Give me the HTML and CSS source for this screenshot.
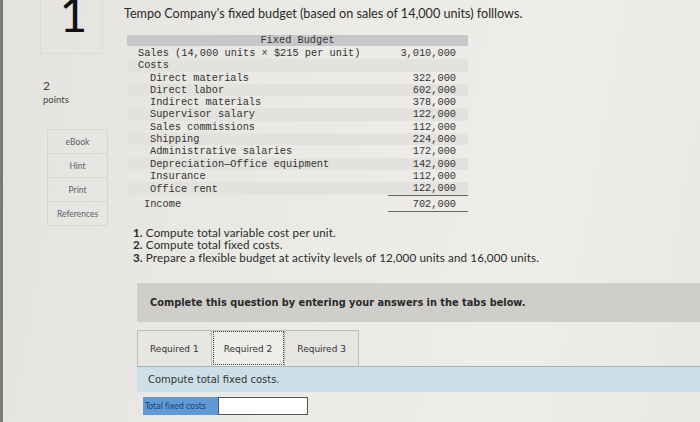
FILE: index.html
```html
<!DOCTYPE html>
<html lang="en">
<head>
  <meta charset="UTF-8"/>
  <title>Tempo Company fixed budget</title>
  <link rel="stylesheet" href="styles.css">
</head>
<body>
  <div class="page">
    <div class="side">
      <div class="qnum"><span>1</span></div>
      <div class="points"><span class="pts-n">2</span><span class="pts-l">points</span></div>
      <div class="tools">
        <div class="tool">eBook</div>
        <div class="tool">Hint</div>
        <div class="tool">Print</div>
        <div class="tool">References</div>
      </div>
    </div>
    <div class="main">
      <p class="title">Tempo Company's fixed budget (based on sales of 14,000 units) folllows.</p>
      <table class="budget">
        <tr class="head"><th colspan="2">Fixed Budget</th></tr>
        <tr><td>Sales (14,000 units &times; $215 per unit)</td><td class="num">3,010,000</td></tr>
        <tr class="alt"><td>Costs</td><td class="num"></td></tr>
        <tr><td class="ind">Direct materials</td><td class="num">322,000</td></tr>
        <tr class="alt"><td class="ind">Direct labor</td><td class="num">602,000</td></tr>
        <tr><td class="ind">Indirect materials</td><td class="num">378,000</td></tr>
        <tr class="alt"><td class="ind">Supervisor salary</td><td class="num">122,000</td></tr>
        <tr><td class="ind">Sales commissions</td><td class="num">112,000</td></tr>
        <tr class="alt"><td class="ind">Shipping</td><td class="num">224,000</td></tr>
        <tr><td class="ind">Administrative salaries</td><td class="num">172,000</td></tr>
        <tr class="alt"><td class="ind">Depreciation&mdash;Office equipment</td><td class="num">142,000</td></tr>
        <tr><td class="ind">Insurance</td><td class="num">112,000</td></tr>
        <tr class="alt"><td class="ind">Office rent</td><td class="num line">122,000</td></tr>
        <tr class="total"><td class="sub">Income</td><td class="num line">702,000</td></tr>
      </table>
      <ol class="tasks">
        <li><b>1.</b> Compute total variable cost per unit.</li>
        <li><b>2.</b> Compute total fixed costs.</li>
        <li><b>3.</b> Prepare a flexible budget at activity levels of 12,000 units and 16,000 units.</li>
      </ol>
      <div class="banner">Complete this question by entering your answers in the tabs below.</div>
      <div class="tabs">
        <div class="tab">Required 1</div>
        <div class="tab active">Required 2</div>
        <div class="tab">Required 3</div>
      </div>
      <div class="prompt">Compute total fixed costs.</div>
      <div class="answer">
        <label class="ans-label">Total fixed costs</label>
        <input class="ans-input" type="text">
      </div>
    </div>
  </div>
</body>
</html>
```

FILE: styles.css
```css
html, body { margin:0; height:100%; }
body {
  background:linear-gradient(100deg, #e4e3df 0%, #ebeae6 45%, #eeede9 75%, #e9e8e4 100%);
  border-left:3px solid #7a7a78; box-sizing:border-box;
  font-family:Lato, "Open Sans", sans-serif; color:#222; overflow:hidden;
}
.page { display:flex; }
.side { width:121px; flex:none; display:flex; flex-direction:column; }
.qnum {
  margin-left:37px; width:63px; height:54px; border:1px solid #dcdbd7; border-top:none;
  box-sizing:border-box; overflow:hidden; display:flex; justify-content:center;
}
.qnum span { font-size:48px; line-height:34px; margin:-3px 0 0 4px; color:#111; font-weight:400; }
.points { display:flex; flex-direction:column; margin:24px 0 0 40px; color:#444; }
.pts-n { font-size:12px; line-height:15px; }
.pts-l { font-size:9.5px; line-height:14px; }
.tools { margin:23px 0 0 44px; display:flex; flex-direction:column; width:61px; }
.tool {
  height:23px; border:1px solid #d7d6d2; margin-top:-1px; box-sizing:content-box;
  display:flex; align-items:center; justify-content:center; font-size:8.5px; color:#5a5f6e;
}
.main { flex:1; padding-top:6px; }
.title { margin:0; font-size:12.6px; line-height:15px; color:#2a2a2a; }
.budget {
  margin:14px 0 0 3px; border-collapse:collapse; width:341px;
  font-family:"Liberation Mono", monospace; font-size:10.3px; color:#333;
}
.budget td, .budget th { padding:0; line-height:12.3px; white-space:nowrap; }
.budget .head th { background:#c6c7cb; font-weight:normal; height:11px; line-height:11px; text-align:center; }
.budget tr:nth-child(2) td { padding-top:1px; }
.budget td:first-child { padding-left:11px; }
.budget td.ind { padding-left:23px; }
.budget td.sub { padding-left:17px; }
.budget tr.alt td { background:#e3e2de; }
.budget td.num { text-align:right; width:68px; padding-right:12px; }
.budget td.line { border-bottom:1px solid #666; }
.budget tr.total td { padding-top:2px; padding-bottom:1px; }
.tasks {
  list-style:none; margin:15px 0 0 9px; padding:0; font-size:11.6px; line-height:12.5px;
  letter-spacing:.14px; color:#2a2a2a;
}
.tasks b { font-weight:bold; }
.banner {
  margin:19px 0 0 13px; height:39px; background:#cfcecb; display:flex; align-items:center;
  padding-left:13px; font-family:"DejaVu Sans", sans-serif; font-weight:bold; font-size:9.8px; color:#2a2a2a;
}
.tabs { display:flex; margin:8px 0 0 13px; }
.tab {
  height:35px; padding:0 12px; display:flex; align-items:center; border:1px solid #bdbcb8; border-bottom:none;
  background:#e6e5e1; font-family:"DejaVu Sans", sans-serif; font-size:9px; color:#333;
}
.tab + .tab { border-left:none; }
.tab.active { background:#efeeeb; outline:1px dotted #444; outline-offset:-2px; }
.prompt {
  margin-left:13px; height:25px; background:#cde0e8; border-top:1px solid #9eb3bd; display:flex; align-items:center;
  padding-left:11px; font-family:"DejaVu Sans", sans-serif; font-size:10px; color:#333;
}
.answer { display:flex; margin:5px 0 0 19px; height:18px; }
.ans-label {
  width:75px; background:#5f9ad6; color:#1d3f72; font-family:"DejaVu Sans", sans-serif; font-size:8px;
  display:flex; align-items:center; padding-left:2px; box-sizing:border-box; letter-spacing:-.2px;
}
.ans-input { width:90px; height:18px; box-sizing:border-box; border:1px solid #555; background:#fff; margin:0; padding:0; }
```
